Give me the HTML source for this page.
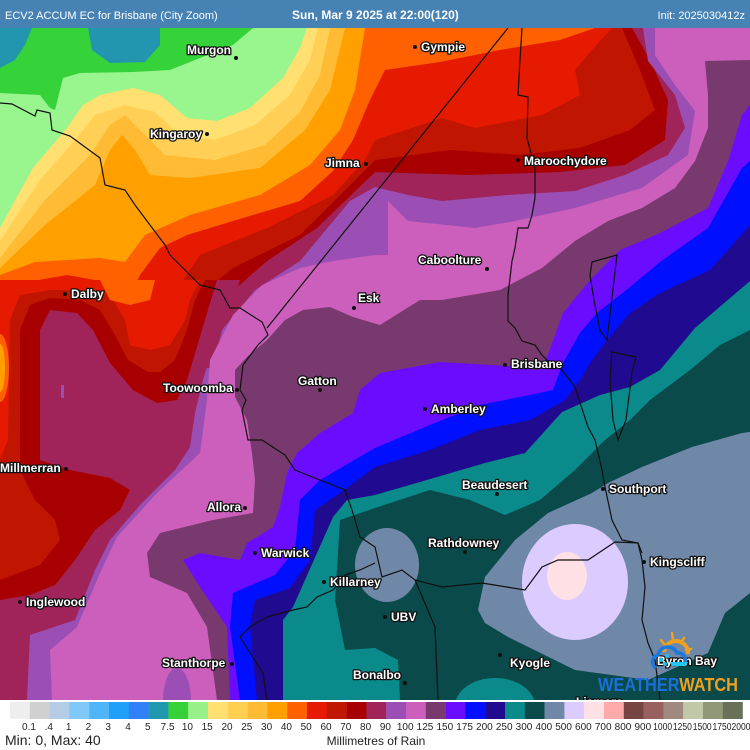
<!DOCTYPE html>
<html><head><meta charset="utf-8"><style>
html,body{margin:0;padding:0;background:#fff;width:750px;height:750px;overflow:hidden}
svg{display:block}
.l{font-family:"Liberation Sans",sans-serif;font-weight:bold;font-size:12px;fill:#fff;stroke:#111;stroke-width:2.6px;paint-order:stroke;stroke-linejoin:round}
.lg{font-family:"Liberation Sans",sans-serif;font-size:10px;fill:#222}
</style></head><body>
<svg width="750" height="750" viewBox="0 0 750 750" xmlns="http://www.w3.org/2000/svg">
<rect x="0" y="0" width="750" height="750" fill="#fff"/>
<g>
<rect x="0" y="28" width="750" height="672" fill="#36d23a"/>
<polygon fill="#2296ae" points="0,28 32,28 25,45 15,60 0,68"/>
<polygon fill="#2296ae" points="88,28 160,28 160,45 145,62 110,63 92,50"/>
<polygon fill="#99f58e" points="0,93 40,95 50,108 55,110 63,78 80,73 133,72 170,70 200,58 233,45 253,28 750,28 750,700 0,700"/>
<polygon fill="#ffe070" points="0,228 33,168 67,128 83,105 100,95 133,88 160,95 187,118 217,121 250,108 283,78 300,48 307,28 750,28 750,700 0,700"/>
<polygon fill="#ffd055" points="0,241 40,180 75,140 95,115 125,105 155,112 180,135 215,140 255,125 290,95 310,60 318,28 750,28 750,700 0,700"/>
<polygon fill="#ffbb33" points="0,258 45,200 90,155 110,125 125,115 140,130 165,155 215,160 265,145 300,112 320,75 330,28 750,28 750,700 0,700"/>
<polygon fill="#ffa000" points="0,268 45,225 95,185 110,150 122,135 135,150 150,175 190,178 260,168 305,130 330,90 345,28 750,28 750,700 0,700"/>
<polygon fill="#ff6000" points="0,275 35,262 100,258 125,262 145,235 190,215 260,195 310,165 340,130 355,90 365,28 750,28 750,700 0,700"/>
<polygon fill="#e61a00" points="0,295 33,281 67,275 100,281 127,301 140,275 160,248 187,235 233,221 300,201 333,171 353,140 370,100 385,70 440,62 500,50 560,40 595,28 750,28 750,700 0,700"/>
<polygon fill="#c01500" points="0,700 0,300 173,295 200,255 267,228 333,195 365,160 375,140 442,118 475,128 542,115 580,95 575,70 592,50 612,28 750,28 750,700"/>
<polygon fill="#a80000" points="0,700 0,368 187,368 200,295 233,268 300,235 375,160 450,150 520,155 580,148 630,130 655,110 640,70 622,28 750,28 750,700"/>
<polygon fill="#a0245a" points="0,700 0,368 200,368 217,305 267,261 317,228 375,172 470,175 560,172 625,165 665,140 668,100 650,60 632,28 750,28 750,700"/>
<polygon fill="#9b4fb5" points="0,700 0,368 213,368 222,330 255,290 300,261 350,201 375,187 408,195 442,201 508,195 575,191 625,175 668,155 685,128 675,95 648,61 643,28 750,28 750,700"/>
<polygon fill="#cc5fbb" points="52,700 50,650 77,627 100,573 117,537 157,493 200,453 207,400 210,360 233,315 262,285 300,268 333,261 375,255 388,255 388,201 408,221 475,228 515,221 575,208 642,188 688,155 695,111 675,85 655,55 655,28 750,28 750,700"/>
<polygon fill="#783a6e" points="217,700 207,627 187,593 150,577 147,553 160,533 213,520 253,513 255,480 252,453 247,420 235,397 235,370 247,357 267,340 285,320 303,310 330,307 353,317 380,325 420,300 442,300 500,290 542,268 575,241 608,221 642,208 675,188 695,161 708,128 708,95 705,61 750,60 750,700"/>
<polygon fill="#6a0dff" points="230,700 227,627 200,587 183,560 200,553 240,560 247,543 273,527 280,507 287,473 297,453 320,433 353,413 360,390 380,373 440,362 510,366 537,370 547,357 563,313 590,280 620,250 660,233 708,208 728,161 742,115 750,105 750,700"/>
<polygon fill="#0010ff" points="240,700 230,627 233,593 275,575 295,550 300,500 320,480 375,448 430,425 480,405 530,395 553,390 563,363 580,333 597,313 630,287 660,262 708,228 742,168 750,161 750,700"/>
<polygon fill="#200a90" points="257,700 250,627 255,600 290,588 310,560 315,510 340,493 375,467 430,450 480,430 530,420 565,400 580,380 590,363 607,340 630,313 660,293 710,270 750,225 750,700"/>
<polygon fill="#0a8a8a" points="283,700 283,620 293,607 333,517 347,500 375,495 420,482 485,463 525,453 562,412 600,395 630,387 660,370 695,328 750,281 750,700"/>
<polygon fill="#0a4a4a" points="340,520 375,508 430,490 470,500 505,515 540,500 575,470 605,440 630,420 650,400 690,370 720,345 750,330 750,700 400,700 398,660 375,648 345,650 335,600"/>
<ellipse cx="495" cy="706" rx="40" ry="28" fill="#0a8a8a"/>
<polygon fill="#7088a8" points="478,610 485,577 515,540 548,513 592,493 608,483 642,467 692,447 742,433 750,432 750,593 725,613 708,653 648,680 575,670 508,637 485,623"/>
<ellipse cx="387" cy="565" rx="32" ry="37" fill="#7088a8"/>
<ellipse cx="575" cy="582" rx="53" ry="58" fill="#dccbff"/>
<ellipse cx="567" cy="576" rx="20" ry="24" fill="#ffe0e4"/>
<polygon fill="#a0245a" points="0,280 240,280 227,320 213,347 203,380 195,413 190,447 175,470 140,505 110,540 95,570 75,620 30,635 27,700 0,700"/>
<polygon fill="#a80000" points="0,280 217,280 207,313 197,347 187,380 177,400 157,403 133,390 110,363 93,330 77,313 50,310 40,330 40,460 70,470 110,478 130,490 120,510 95,530 75,560 55,585 30,595 0,600"/>
<polygon fill="#c01500" points="0,280 205,280 195,300 187,330 175,360 160,372 148,372 128,360 115,335 100,310 80,300 50,298 30,305 20,330 20,470 35,500 55,520 60,540 40,565 0,580"/>
<polygon fill="#e61a00" points="0,280 200,280 190,300 185,320 170,345 150,350 130,345 125,320 110,295 80,290 50,290 20,295 10,320 8,440 0,460"/>
<polygon fill="#ff6000" points="100,280 155,280 150,300 130,305 110,300"/>
<ellipse cx="0" cy="368" rx="9" ry="34" fill="#ff6000"/>
<ellipse cx="0" cy="368" rx="5" ry="24" fill="#ffa000"/>
<rect x="61" y="385" width="3" height="13" fill="#9b4fb5"/>
<ellipse cx="177" cy="700" rx="14" ry="32" fill="#9b4fb5"/>
</g>
<g fill="none" stroke="#111" stroke-width="1.2">
<polyline points="0,103 12,104 35,116 37,110 50,113 52,130 70,136 100,158 105,185 125,190 135,205 150,225 165,245 170,255 185,270 200,285 220,290 230,308 240,308 262,322 268,335 258,345 243,365 240,390 246,400 242,410 248,440 262,440 285,455 295,470 320,480 345,490 352,510 360,537 375,547 382,577 402,570 415,580 442,587 482,583 525,590 542,567 558,560 588,560 615,542 638,543 642,553"/>
<polyline points="267,617 293,610 307,607 317,597 333,590 345,575 360,570 375,563"/>
<polyline points="267,700 263,673 240,637 250,627 267,617"/>
<polyline points="415,580 435,627 438,700"/>
<polyline points="267,328 508,28"/>
<polyline points="522,28 520,60 518,95 528,97 527,138 535,168 535,198 532,215 528,228 518,228 515,248 512,261 508,295 508,321 515,328 522,341 535,345 542,355 548,361 562,370 575,387 588,427 595,440 602,470 605,487 612,520 622,540 638,543 642,560 645,587 642,620 648,643 655,660 660,700"/>
<polygon points="592,262 617,255 607,340 600,330 594,300 590,275"/>
<polygon points="612,352 636,357 632,372 626,420 618,440 613,420 610,380"/>
</g>
<g fill="#111">
<circle cx="236" cy="58" r="2"/><circle cx="415" cy="47" r="2"/><circle cx="207" cy="134" r="2"/><circle cx="366" cy="164" r="2"/><circle cx="518" cy="160" r="2"/><circle cx="487" cy="269" r="2"/><circle cx="65" cy="294" r="2"/><circle cx="354" cy="308" r="2"/><circle cx="505" cy="365" r="2"/><circle cx="237" cy="390" r="2"/><circle cx="320" cy="390" r="2"/><circle cx="425" cy="409" r="2"/><circle cx="66" cy="469" r="2"/><circle cx="497" cy="494" r="2"/><circle cx="603" cy="489" r="2"/><circle cx="245" cy="508" r="2"/><circle cx="465" cy="552" r="2"/><circle cx="255" cy="553" r="2"/><circle cx="644" cy="562" r="2"/><circle cx="324" cy="582" r="2"/><circle cx="20" cy="602" r="2"/><circle cx="385" cy="617" r="2"/><circle cx="232" cy="664" r="2"/><circle cx="500" cy="655" r="2"/><circle cx="405" cy="683" r="2"/>
</g>
<g class="l">
<text x="187" y="54">Murgon</text><text x="421" y="51">Gympie</text><text x="150" y="138">Kingaroy</text><text x="325" y="167">Jimna</text><text x="524" y="165">Maroochydore</text><text x="418" y="264">Caboolture</text><text x="71" y="298">Dalby</text><text x="358" y="302">Esk</text><text x="511" y="368">Brisbane</text><text x="163" y="392">Toowoomba</text><text x="298" y="385">Gatton</text><text x="431" y="413">Amberley</text><text x="0" y="472">Millmerran</text><text x="462" y="489">Beaudesert</text><text x="609" y="493">Southport</text><text x="207" y="511">Allora</text><text x="428" y="547">Rathdowney</text><text x="261" y="557">Warwick</text><text x="650" y="566">Kingscliff</text><text x="330" y="586">Killarney</text><text x="26" y="606">Inglewood</text><text x="391" y="621">UBV</text><text x="162" y="667">Stanthorpe</text><text x="510" y="667">Kyogle</text><text x="353" y="679">Bonalbo</text><text x="657" y="665">Byron Bay</text><text x="576" y="706">Lismore</text>
</g>
<g>
<g stroke="#f0a020" stroke-width="2.5" stroke-linecap="round"><line x1="672" y1="633" x2="673" y2="640"/><line x1="684" y1="638" x2="681" y2="643"/><line x1="691" y1="649" x2="686" y2="650"/><line x1="661" y1="640" x2="664" y2="644"/></g>
<path d="M664,652 a12,12 0 0 1 24,2" fill="none" stroke="#f0a020" stroke-width="4"/>
<path d="M656,668 a7,7 0 0 1 2,-13 a10,10 0 0 1 19,-2 a7,7 0 0 1 6,12" fill="none" stroke="#1a78e0" stroke-width="3.5"/>
<circle cx="661" cy="660" r="2" fill="#20c0f0"/><circle cx="667" cy="656" r="2" fill="#20c0f0"/><circle cx="665" cy="664" r="2" fill="#20c0f0"/>
<path d="M670,662 h18 l-2,4 h-14 z" fill="#20c8f0"/>
<text x="598" y="691" font-family="Liberation Sans,sans-serif" font-weight="bold" font-size="18" textLength="140" lengthAdjust="spacingAndGlyphs"><tspan fill="#1a6fd8">WEATHER</tspan><tspan fill="#f0a020">WATCH</tspan></text>
</g>
<rect x="0" y="0" width="750" height="28" fill="#4682b4"/>
<text x="5" y="19" font-family="Liberation Sans,sans-serif" font-size="11" fill="#fff">ECV2 ACCUM EC for Brisbane (City Zoom)</text>
<text x="292" y="19" font-family="Liberation Sans,sans-serif" font-size="12" font-weight="bold" fill="#fff">Sun, Mar 9 2025 at 22:00(120)</text>
<text x="745" y="19" text-anchor="end" font-family="Liberation Sans,sans-serif" font-size="11" fill="#fff">Init: 2025030412z</text>
<rect x="0" y="700" width="750" height="50" fill="#fff"/>
<g>
<rect x="10" y="702" width="20" height="17" fill="#eeeeee"/><rect x="29.8" y="702" width="20" height="17" fill="#d0d0d0"/><rect x="49.6" y="702" width="20" height="17" fill="#b4cce4"/><rect x="69.4" y="702" width="20" height="17" fill="#80c8f8"/><rect x="89.2" y="702" width="20" height="17" fill="#50b4f8"/><rect x="109" y="702" width="20" height="17" fill="#20a0f8"/><rect x="128.8" y="702" width="20" height="17" fill="#3080f8"/><rect x="148.6" y="702" width="20" height="17" fill="#2098b0"/><rect x="168.4" y="702" width="20" height="17" fill="#38d038"/><rect x="188.2" y="702" width="20" height="17" fill="#98f088"/><rect x="208" y="702" width="20" height="17" fill="#ffe070"/><rect x="227.8" y="702" width="20" height="17" fill="#ffd050"/><rect x="247.6" y="702" width="20" height="17" fill="#ffbb33"/><rect x="267.4" y="702" width="20" height="17" fill="#ffa000"/><rect x="287.2" y="702" width="20" height="17" fill="#ff6000"/><rect x="307" y="702" width="20" height="17" fill="#e61a00"/><rect x="326.8" y="702" width="20" height="17" fill="#c01800"/><rect x="346.6" y="702" width="20" height="17" fill="#a80000"/><rect x="366.4" y="702" width="20" height="17" fill="#a0245a"/><rect x="386.2" y="702" width="20" height="17" fill="#9b4fb5"/><rect x="406" y="702" width="20" height="17" fill="#cc5fbb"/><rect x="425.8" y="702" width="20" height="17" fill="#783a6e"/><rect x="445.6" y="702" width="20" height="17" fill="#6a0dff"/><rect x="465.4" y="702" width="20" height="17" fill="#0010ff"/><rect x="485.2" y="702" width="20" height="17" fill="#200a90"/><rect x="505" y="702" width="20" height="17" fill="#0a8a8a"/><rect x="524.8" y="702" width="20" height="17" fill="#0a4a4a"/><rect x="544.6" y="702" width="20" height="17" fill="#7088a8"/><rect x="564.4" y="702" width="20" height="17" fill="#dccbff"/><rect x="584.2" y="702" width="20" height="17" fill="#ffe0e4"/><rect x="604" y="702" width="20" height="17" fill="#ffaaaa"/><rect x="623.8" y="702" width="20" height="17" fill="#774444"/><rect x="643.6" y="702" width="20" height="17" fill="#996060"/><rect x="663.4" y="702" width="20" height="17" fill="#a08a80"/><rect x="683.2" y="702" width="20" height="17" fill="#c0c8a8"/><rect x="703" y="702" width="20" height="17" fill="#909878"/><rect x="722.8" y="702" width="20" height="17" fill="#687058"/>
</g>
<g class="lg" text-anchor="middle">
<text x="29" y="730">0.1</text><text x="48.8" y="730">.4</text><text x="68.6" y="730">1</text><text x="88.4" y="730">2</text><text x="108.2" y="730">3</text><text x="128" y="730">4</text><text x="147.8" y="730">5</text><text x="167.6" y="730">7.5</text><text x="187.4" y="730">10</text><text x="207.2" y="730">15</text><text x="227" y="730">20</text><text x="246.8" y="730">25</text><text x="266.6" y="730">30</text><text x="286.4" y="730">40</text><text x="306.2" y="730">50</text><text x="326" y="730">60</text><text x="345.8" y="730">70</text><text x="365.6" y="730">80</text><text x="385.4" y="730">90</text><text x="405.2" y="730">100</text><text x="425" y="730">125</text><text x="444.8" y="730">150</text><text x="464.6" y="730">175</text><text x="484.4" y="730">200</text><text x="504.2" y="730">250</text><text x="524" y="730">300</text><text x="543.8" y="730">400</text><text x="563.6" y="730">500</text><text x="583.4" y="730">600</text><text x="603.2" y="730">700</text><text x="623" y="730">800</text><text x="642.8" y="730">900</text><text x="662.6" y="730" textLength="19" lengthAdjust="spacingAndGlyphs">1000</text><text x="682.4" y="730" textLength="19" lengthAdjust="spacingAndGlyphs">1250</text><text x="702.2" y="730" textLength="19" lengthAdjust="spacingAndGlyphs">1500</text><text x="722" y="730" textLength="19" lengthAdjust="spacingAndGlyphs">1750</text><text x="741" y="730" textLength="19" lengthAdjust="spacingAndGlyphs">2000</text>
</g>
<text x="5" y="745" font-family="Liberation Sans,sans-serif" font-size="14" fill="#222">Min: 0, Max: 40</text>
<text x="376" y="745" text-anchor="middle" font-family="Liberation Sans,sans-serif" font-size="12" fill="#222">Millimetres of Rain</text>
</svg>
</body></html>
